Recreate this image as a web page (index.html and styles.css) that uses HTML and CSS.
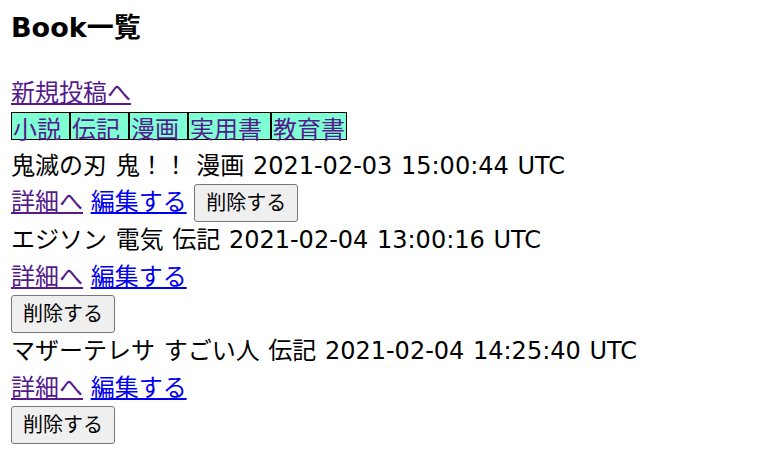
FILE: index.html
```html
<!DOCTYPE html>
<html lang="ja">
<head>
<meta charset="utf-8">
<title>Book一覧</title>
<link rel="stylesheet" href="styles.css">
</head>
<body>
<h1 class="page-title">Book一覧</h1>
<p class="new-link"><a class="visited" href="#new">新規投稿へ</a></p>
<table class="categories">
  <tr>
    <td><a class="visited" href="#c1">小説</a></td>
    <td><a class="visited" href="#c2">伝記</a></td>
    <td><a class="visited" href="#c3">漫画</a></td>
    <td><a class="visited" href="#c4">実用書</a></td>
    <td><a class="visited" href="#c5">教育書</a></td>
  </tr>
</table>
<div class="book">
  <div class="book-line">鬼滅の刃 鬼！！ 漫画 2021-02-03 15:00:44 UTC</div>
  <div class="actions"><a class="visited" href="#b1">詳細へ</a> <a href="#e1">編集する</a> <button class="btn" type="button">削除する</button></div>
</div>
<div class="book">
  <div class="book-line">エジソン 電気 伝記 2021-02-04 13:00:16 UTC</div>
  <div class="actions"><a class="visited" href="#b2">詳細へ</a> <a href="#e2">編集する</a></div>
  <form class="button-to"><button class="btn" type="button">削除する</button></form>
</div>
<div class="book">
  <div class="book-line">マザーテレサ すごい人 伝記 2021-02-04 14:25:40 UTC</div>
  <div class="actions"><a class="visited" href="#b3">詳細へ</a> <a href="#e3">編集する</a></div>
  <form class="button-to"><button class="btn" type="button">削除する</button></form>
</div>
</body>
</html>
```

FILE: styles.css
```css
body {
  margin: 11px;
  font-family: "DejaVu Sans", "Noto Sans CJK JP", sans-serif;
  font-size: 24px;
  line-height: 36.5px;
  color: #000;
  background: #fff;
}

a {
  color: #0000ee;
  text-decoration: underline;
}

a.visited {
  color: #551a8b;
}

.page-title {
  margin: 0;
  font-size: 27px;
  line-height: 33px;
  font-weight: bold;
}

.new-link {
  margin: 30.5px 0 0;
}

.categories {
  margin: 1px 0 7.5px;
  border-collapse: separate;
  border-spacing: 0;
  background: #7fffd4;
}

.categories td {
  border: 1px solid #000;
  padding: 8px 8px 0 1px;
  line-height: 18px;
  background: #7fffd4;
}

.categories td:last-child {
  padding-right: 1px;
}

.categories a {
  text-decoration: none;
}

.book-line {
  word-spacing: 1px;
}

.button-to {
  margin: 0;
}

.btn {
  box-sizing: border-box;
  height: 38px;
  margin: 0;
  padding: 0 11px;
  font-family: "DejaVu Sans", "Noto Sans CJK JP", sans-serif;
  font-size: 20px;
  line-height: 36px;
  color: #000;
  background: #efefef;
  border: 1px solid #767676;
  border-radius: 3px;
}
```
